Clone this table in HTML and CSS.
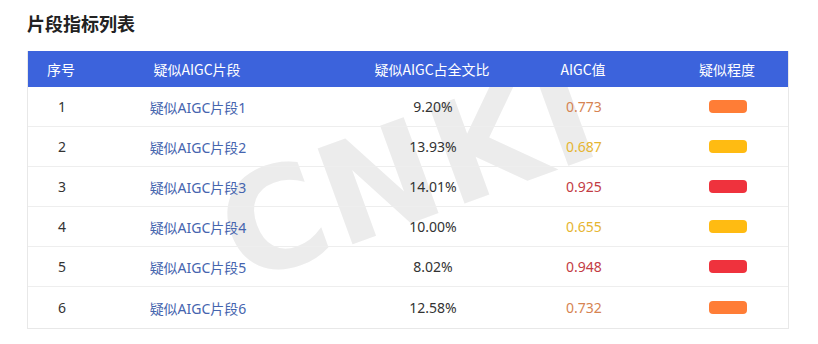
FILE: index.html
```html
<!DOCTYPE html>
<html lang="zh-CN">
<head>
<meta charset="utf-8">
<title>片段指标列表</title>
<link rel="stylesheet" href="styles.css">
</head>
<body>
<div class="page">
  <h2 class="title">片段指标列表</h2>
  <div class="table">
    <div class="watermark" aria-hidden="true">CNKI</div>
    <div class="row head">
      <div class="cell">序号</div>
      <div class="cell">疑似AIGC片段</div>
      <div class="cell c3">疑似AIGC占全文比</div>
      <div class="cell">AIGC值</div>
      <div class="cell">疑似程度</div>
    </div>
    <div class="row">
      <div class="cell">1</div>
      <div class="cell link">疑似AIGC片段1</div>
      <div class="cell c3">9.20%</div>
      <div class="cell v-orange">0.773</div>
      <div class="cell"><span class="badge b-orange"></span></div>
    </div>
    <div class="row">
      <div class="cell">2</div>
      <div class="cell link">疑似AIGC片段2</div>
      <div class="cell c3">13.93%</div>
      <div class="cell v-yellow">0.687</div>
      <div class="cell"><span class="badge b-yellow"></span></div>
    </div>
    <div class="row">
      <div class="cell">3</div>
      <div class="cell link">疑似AIGC片段3</div>
      <div class="cell c3">14.01%</div>
      <div class="cell v-red">0.925</div>
      <div class="cell"><span class="badge b-red"></span></div>
    </div>
    <div class="row">
      <div class="cell">4</div>
      <div class="cell link">疑似AIGC片段4</div>
      <div class="cell c3">10.00%</div>
      <div class="cell v-yellow">0.655</div>
      <div class="cell"><span class="badge b-yellow"></span></div>
    </div>
    <div class="row">
      <div class="cell">5</div>
      <div class="cell link">疑似AIGC片段5</div>
      <div class="cell c3">8.02%</div>
      <div class="cell v-red">0.948</div>
      <div class="cell"><span class="badge b-red"></span></div>
    </div>
    <div class="row last">
      <div class="cell">6</div>
      <div class="cell link">疑似AIGC片段6</div>
      <div class="cell c3">12.58%</div>
      <div class="cell v-orange">0.732</div>
      <div class="cell"><span class="badge b-orange"></span></div>
    </div>
  </div>
</div>
</body>
</html>
```
FILE: styles.css
```css
* { box-sizing: border-box; }
html, body {
  margin: 0;
  padding: 0;
  background: #ffffff;
}
body {
  font-family: "Noto Sans", "Noto Sans CJK SC", sans-serif;
  color: #333333;
}
.page {
  padding: 11px 0 0 27px;
}
.title {
  margin: 0 0 16px 0;
  font-family: "Noto Sans CJK SC", sans-serif;
  font-size: 18px;
  line-height: 24px;
  font-weight: 700;
  color: #222222;
}
.table {
  position: relative;
  width: 762px;
  border: 1px solid #e8e8e8;
  border-top: none;
  background: #ffffff;
  overflow: hidden;
}
.watermark {
  position: absolute;
  left: 186px;
  top: 52px;
  font-family: "DejaVu Sans", "Liberation Sans", sans-serif;
  font-weight: 700;
  font-size: 140px;
  line-height: 1;
  letter-spacing: 2px;
  color: #ececec;
  transform: rotate(-20deg);
  transform-origin: center center;
  pointer-events: none;
  user-select: none;
  z-index: 0;
}
.row {
  position: relative;
  z-index: 1;
  display: grid;
  grid-template-columns: 68px 204px 200px 168px 120px;
  height: 40px;
  border-bottom: 1px solid #eeeeee;
  font-size: 14px;
}
.row.last {
  height: 41px;
  border-bottom: none;
}
.row.head {
  z-index: 2;
  height: 36px;
  margin: 0 -1px;
  width: 762px;
  background: #3c63dc;
  color: #ffffff;
  border-bottom: none;
  font-family: "Noto Sans CJK SC", sans-serif;
}
.cell {
  display: flex;
  align-items: center;
  justify-content: center;
  white-space: nowrap;
}
.c3 { padding-left: 66px; }
.link { color: #4564ae; }
.v-orange { color: #d68452; }
.v-yellow { color: #e6b531; }
.v-red { color: #c33c44; }
.badge {
  display: block;
  width: 38px;
  height: 13px;
  border-radius: 4px;
}
.b-orange { background: #ff7d36; }
.b-yellow { background: #ffbb12; }
.b-red { background: #ef323d; }
```
